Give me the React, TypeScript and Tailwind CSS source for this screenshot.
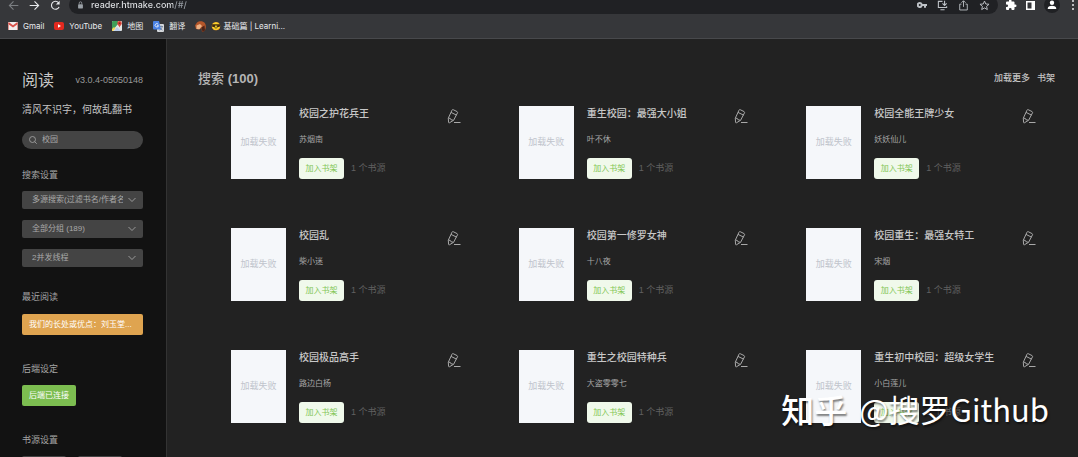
import { ReactNode } from 'react';

const books = [
  { name: '校园之护花兵王', author: '苏烟南' },
  { name: '重生校园：最强大小姐', author: '叶不休' },
  { name: '校园全能王牌少女', author: '妖妖仙儿' },
  { name: '校园乱', author: '柴小迷' },
  { name: '校园第一修罗女神', author: '十八夜' },
  { name: '校园重生：最强女特工', author: '宋烟' },
  { name: '校园极品高手', author: '路边白杨' },
  { name: '重生之校园特种兵', author: '大盗零零七' },
  { name: '重生初中校园：超级女学生', author: '小白莲儿' },
];

function StrokeIcon({ children, className }: { children: ReactNode; className: string }) {
  return (
    <svg
      viewBox="0 0 16 16"
      fill="none"
      stroke="currentColor"
      strokeWidth="1.6"
      className={`shrink-0 ${className}`}
    >
      {children}
    </svg>
  );
}

function Toolbar() {
  return (
    <div className="flex h-[14px] flex-col justify-end overflow-hidden">
      <div className="flex h-[18px] shrink-0 items-center pl-2 pr-px text-[#e8eaed]">
        <div className="flex w-[61px] items-center gap-[10px]">
          <button aria-label="后退" className="text-[#7b7e82]">
            <StrokeIcon className="size-[11px]">
              <path d="M15 8H2M8 2L2 8l6 6" />
            </StrokeIcon>
          </button>
          <button aria-label="前进">
            <StrokeIcon className="size-[11px]">
              <path d="M1 8h13M8 2l6 6-6 6" />
            </StrokeIcon>
          </button>
          <button aria-label="刷新">
            <StrokeIcon className="size-[11px]">
              <path d="M13.2 10.2A5.8 5.8 0 1 1 12.4 4" />
              <path d="M14 1v5.5H8.5z" fill="currentColor" stroke="none" />
            </StrokeIcon>
          </button>
        </div>
        <div className="flex h-full flex-1 items-center rounded-full bg-[#202124] pl-2 pr-2 text-[#bdc1c6]">
          <svg viewBox="0 0 8 10" className="h-2 w-[7px]" fill="#9aa0a6">
            <rect x="1" y="4" width="6" height="5.5" rx="0.6" />
            <path d="M2.4 4V2.6a1.6 1.6 0 0 1 3.2 0V4" fill="none" stroke="#9aa0a6" />
          </svg>
          <input
            aria-label="地址"
            defaultValue="reader.htmake.com/#/"
            className="ml-[7px] min-w-0 flex-1 bg-[linear-gradient(90deg,#e8eaed_82px,#9aa0a6_82px)] bg-clip-text text-[9px] font-medium text-transparent outline-none"
          />
          <div className="flex items-center gap-[10px]">
            <button aria-label="密码">
              <svg viewBox="0 0 20 12" className="h-[6px] w-[10px]" fill="currentColor">
                <path
                  fillRule="evenodd"
                  d="M5.5 0a6 6 0 0 1 5.6 4H20v4h-2v3.5h-4V8h-2.9A6 6 0 1 1 5.5 0zM5.5 4a2 2 0 1 0 0 4 2 2 0 0 0 0-4z"
                />
              </svg>
            </button>
            <button aria-label="安装">
              <StrokeIcon className="size-[11px]">
                <path d="M8 2H2v9h12V9M5 14.2h6M11 1v6M8 5l3 3 3-3" />
              </StrokeIcon>
            </button>
            <button aria-label="分享">
              <StrokeIcon className="size-[11px]">
                <path d="M5 6H2.5v8.5h11V6H11M8 10V1.5M5 4l3-3 3 3" strokeWidth="1.3" />
              </StrokeIcon>
            </button>
            <button aria-label="收藏">
              <StrokeIcon className="size-[11px]">
                <path
                  d="M8 1.5l1.9 4.3 4.7.4-3.6 3.1 1.1 4.6L8 11.5l-4.1 2.4L5 9.3 1.4 6.2l4.7-.4z"
                  strokeWidth="1.4"
                />
              </StrokeIcon>
            </button>
          </div>
        </div>
        <div className="ml-[7px] flex items-center gap-[9px]">
          <button aria-label="扩展程序">
            <svg viewBox="0 0 24 24" className="size-3" fill="#fff">
              <path d="M20.5 11H19V7a2 2 0 0 0-2-2h-4V3.500a2.500 2.500 0 0 0-5 0V5H4a2 2 0 0 0-2 2v3.800h1.500a2.700 2.700 0 0 1 0 5.400H2V20a2 2 0 0 0 2 2h3.800v-1.500a2.700 2.700 0 0 1 5.400 0V22H17a2 2 0 0 0 2-2v-4h1.500a2.500 2.500 0 0 0 0-5z" />
            </svg>
          </button>
          <button aria-label="侧边栏">
            <svg viewBox="0 0 9 9" className="size-[9px]">
              <rect x="0.75" y="0.75" width="7.5" height="7.5" fill="none" stroke="#fff" strokeWidth="1.5" />
              <path d="M5.5 1H8v7H5.5z" fill="#fff" />
            </svg>
          </button>
          <button aria-label="用户">
            <svg viewBox="0 0 16 16" className="size-4">
              <circle cx="8" cy="8" r="8" fill="#202124" />
              <circle cx="8" cy="5.8" r="2.2" fill="#fff" />
              <path d="M3.8 12v-1c0-1.5 2.7-2.3 4.2-2.3s4.2.8 4.2 2.3v1z" fill="#fff" />
            </svg>
          </button>
          <button aria-label="更多">
            <svg viewBox="0 0 8 12" className="h-3 w-2" fill="#e8eaed">
              <circle cx="4" cy="2" r="1" />
              <circle cx="4" cy="6" r="1" />
              <circle cx="4" cy="10" r="1" />
            </svg>
          </button>
        </div>
      </div>
    </div>
  );
}

function Bookmark({ label, icon }: { label: string; icon: ReactNode }) {
  return (
    <a href="#" className="flex items-center gap-[5px] whitespace-nowrap">
      {icon}
      {label}
    </a>
  );
}

function BookmarksBar() {
  return (
    <nav className="flex h-[25px] items-center gap-[10px] border-b border-[#48494c] pl-2 text-[8px] text-[#e8eaed]">
      <Bookmark
        label="Gmail"
        icon={
          <svg viewBox="0 0 10 8" className="h-2 w-[10px]">
            <rect width="10" height="8" rx="1" fill="#f3eeee" />
            <path d="M0 1v1l5 3.5L10 2V1L9 .3 5 3.2 1 .3z" fill="#d9524a" />
            <path d="M0 1.5h.9V8H.5L0 7.5zM9.1 1.5h.9v6l-.5.5h-.4z" fill="#d98a85" />
          </svg>
        }
      />
      <Bookmark
        label="YouTube"
        icon={
          <svg viewBox="0 0 10 8" className="h-2 w-[10px]">
            <rect width="10" height="8" rx="2" fill="#e3291f" />
            <path d="M4 2.3v3.4L7 4z" fill="#fff" />
          </svg>
        }
      />
      <Bookmark
        label="地图"
        icon={
          <svg viewBox="0 0 10 10" className="size-[10px]">
            <rect width="10" height="10" rx="1" fill="#e8e8e4" />
            <path d="M0 1a1 1 0 0 1 1-1h5v3L1 9H0z" fill="#3f9f59" />
            <path d="M2 10l3-4 4 4z" fill="#b9cdec" />
            <path d="M0 8l2-2 1.5 1.5L1 10H0z" fill="#f5d35b" />
            <path d="M7.5 0A2.3 2.3 0 0 0 5.2 2.3c0 1.7 1.7 2 2.3 4.2.6-2.2 2.3-2.5 2.3-4.2A2.3 2.3 0 0 0 7.5 0z" fill="#d9453a" />
            <circle cx="7.5" cy="2.3" r="0.8" fill="#7d1f19" />
          </svg>
        }
      />
      <Bookmark
        label="翻译"
        icon={
          <svg viewBox="0 0 11 11" className="size-[11px]">
            <rect x="4" y="3" width="7" height="8" rx="1" fill="#d5d8dc" />
            <path d="M6 5.5h4M8 4.5v1M9.3 5.5c-.5 2-1.5 3-3 3.7M6.8 6.5c.5 1.3 1.5 2 2.7 2.7" stroke="#62738c" strokeWidth="0.7" fill="none" />
            <path d="M1 0h5l2 8.5H1a1 1 0 0 1-1-1V1a1 1 0 0 1 1-1z" fill="#4a82e4" />
            <path d="M5.2 3.3a1.7 1.7 0 1 0 .3 1.4H4" stroke="#fff" strokeWidth="0.8" fill="none" />
          </svg>
        }
      />
      <Bookmark
        label="😎 基础篇 | Learni..."
        icon={
          <svg viewBox="0 0 11 11" className="size-[11px]">
            <path d="M2 1.5C4-.2 8-.3 9.8 2c1.6 2.3 1.3 5.5-.3 8L7 11 6.5 7 4 8.5 1 8 0 4.5z" fill="#b5562a" />
            <path d="M1.5 4.5L5 3l2 2-2.5 3.3L1.5 8z" fill="#eeb184" />
            <path d="M6.5 6.5l3-2 .5 5-2.5 1.5z" fill="#4e2418" />
          </svg>
        }
      />
    </nav>
  );
}

function SectionTitle({ children }: { children: ReactNode }) {
  return <h2 className="text-[9px] leading-3 text-[#a5a5a5]">{children}</h2>;
}

function SettingSelect({ label, value }: { label: string; value: string }) {
  return (
    <div className="relative">
      <select
        aria-label={label}
        className="block h-[18px] w-full appearance-none overflow-hidden rounded-[2px] bg-[#444] pl-[10px] pr-5 text-[8px] text-[#a9a9a9]"
      >
        <option>{value}</option>
      </select>
      <StrokeIcon className="pointer-events-none absolute right-[7px] top-[5px] size-2 text-[#b0b0b0]">
        <path d="M1 4l7 7 7-7" />
      </StrokeIcon>
    </div>
  );
}

function Sidebar() {
  return (
    <aside className="w-[167px] shrink-0 overflow-hidden border-r border-[#333] bg-[#121212] pl-[22px] pr-[23px] pt-8">
      <div className="flex items-center justify-between">
        <h1 className="text-[16px] leading-5 text-[#c8c8c8]">阅读</h1>
        <span className="text-[9px] text-[#999]">v3.0.4-05050148</span>
      </div>
      <p className="mt-3 whitespace-nowrap text-[10px] leading-[14px] text-[#c4c4c4]">清风不识字，何故乱翻书</p>

      <label className="mt-[14px] flex h-[18px] items-center gap-[5px] rounded-full bg-[#444] pl-[7px] text-[#a9a9a9]">
        <StrokeIcon className="size-2">
          <circle cx="7" cy="7" r="6" />
          <path d="M11.5 11.5l4 4" />
        </StrokeIcon>
        <input aria-label="搜索书籍" defaultValue="校园" className="w-20 text-[8px] outline-none" />
      </label>

      <div className="mt-5">
        <SectionTitle>搜索设置</SectionTitle>
        <div className="mt-[10px] flex flex-col gap-[11px]">
          <SettingSelect label="搜索类型" value="多源搜索(过滤书名/作者名" />
          <SettingSelect label="书源分组" value="全部分组 (189)" />
          <SettingSelect label="并发线程" value="2并发线程" />
        </div>
      </div>

      <div className="mt-6">
        <SectionTitle>最近阅读</SectionTitle>
        <button className="mt-[11px] block h-[21px] w-full rounded-[2px] bg-[#dfa450] px-[7px] text-left text-[8px] text-white">
          我们的长处或优点：刘玉堂...
        </button>
      </div>

      <div className="mt-7">
        <SectionTitle>后端设定</SectionTitle>
        <button className="mt-[10px] block h-[21px] rounded-[2px] bg-[#7cbd50] px-[7px] text-[8px] text-white">
          后端已连接
        </button>
      </div>

      <div className="mt-7">
        <SectionTitle>书源设置</SectionTitle>
        <div className="mt-[10px] flex gap-3">
          <button aria-label="书源管理" className="h-[21px] w-11 rounded-[2px] bg-[#444]" />
          <button aria-label="新增书源" className="h-[21px] w-11 rounded-[2px] bg-[#444]" />
        </div>
      </div>
    </aside>
  );
}

function BookCard({ name, author }: { name: string; author: string }) {
  return (
    <article className="flex pl-[33px] pr-[25px]">
      <div className="flex h-[73px] w-[55px] shrink-0 items-center justify-center bg-[#f5f7fa] text-[9px] text-[#c0c4cc]">
        加载失败
      </div>
      <div className="ml-[13px] flex min-w-0 flex-1 flex-col">
        <h3 className="whitespace-nowrap text-[10px] font-medium leading-4 text-[#c8c8c8]">{name}</h3>
        <p className="mt-3 text-[8px] leading-3 text-[#a5a5a5]">{author}</p>
        <div className="mt-auto flex items-center gap-[7px]">
          <button className="h-[21px] w-[45px] rounded-[3px] bg-[#f0f9eb] text-[8px] text-[#81c653]">加入书架</button>
          <span className="text-[9px] text-[#606060]">1 个书源</span>
        </div>
      </div>
      <button aria-label={`编辑 ${name}`} className="mt-[2px] h-4 text-[#a8a8a8]">
        <svg viewBox="0 0 14 16" className="h-4 w-[14px]" fill="none" stroke="currentColor" strokeWidth="1">
          <path d="M6.2 1.7l3.9 1.9c.5.3.7.7.4 1.2L6.600 12.300l-4.200 2.500c-.5.200-.8 0-.8-.400L1.300 10.200 5 2.200c.3-.6.700-.8 1.200-.5z" />
          <path d="M4 4.400l5.500 2.700M1.500 10.200l1.800.2.600 1.300 2.500.6M7 14.500h6.500" />
        </svg>
      </button>
    </article>
  );
}

export default function App() {
  return (
    <div className="relative flex h-screen flex-col overflow-hidden bg-[#222] font-['Liberation_Sans','Noto_Sans_CJK_SC',sans-serif]">
      <header className="shrink-0 bg-[#36373a] font-['Inter','Noto_Sans_CJK_SC',sans-serif]">
        <Toolbar />
        <BookmarksBar />
      </header>
      <div className="flex min-h-0 flex-1">
        <Sidebar />
        <main className="min-w-0 flex-1 overflow-hidden pl-[31px] pt-8">
          <div className="flex items-center justify-between pr-[23px]">
            <h2 className="text-[13px] font-bold leading-4 text-[#b5b5b5]">
              <span className="font-medium">搜索</span> (100)
            </h2>
            <div className="flex gap-[7px] text-[9px] font-medium text-[#c4c4c4]">
              <button>加载更多</button>
              <button>书架</button>
            </div>
          </div>
          <div className="mt-[19px] grid grid-cols-3 gap-y-[49px] pr-[17px]">
            {books.map((book) => (
              <BookCard key={book.name} name={book.name} author={book.author} />
            ))}
          </div>
        </main>
      </div>
      <div className="pointer-events-none absolute bottom-7 right-[29px] flex items-center gap-3 whitespace-nowrap font-['Noto_Sans_CJK_SC',sans-serif] text-[31px] leading-10 text-white [text-shadow:1px_2px_2px_rgba(0,0,0,0.5)]">
        <span className="text-[33px] font-medium">知乎</span>
        <span>@搜罗Github</span>
      </div>
    </div>
  );
}
